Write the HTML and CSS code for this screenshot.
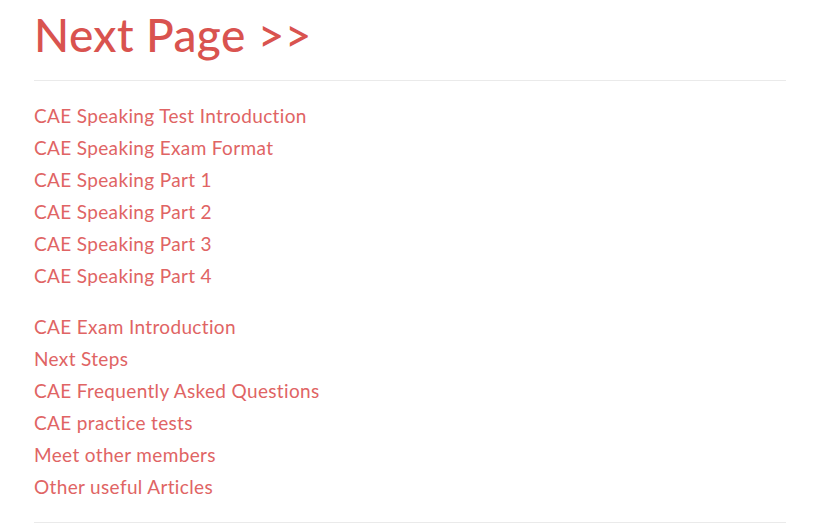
FILE: index.html
```html
<!DOCTYPE html>
<html>
<head>
<meta charset="utf-8">
<link rel="stylesheet" href="styles.css">
</head>
<body>
<div class="page">
  <h1 class="title">Next Page &gt;&gt;</h1>
  <hr class="rule">
  <ul class="links">
    <li><a href="#">CAE Speaking Test Introduction</a></li>
    <li><a href="#">CAE Speaking Exam Format</a></li>
    <li><a href="#">CAE Speaking Part 1</a></li>
    <li><a href="#">CAE Speaking Part 2</a></li>
    <li><a href="#">CAE Speaking Part 3</a></li>
    <li><a href="#">CAE Speaking Part 4</a></li>
  </ul>
  <ul class="links second">
    <li><a href="#">CAE Exam Introduction</a></li>
    <li><a href="#">Next Steps</a></li>
    <li><a href="#">CAE Frequently Asked Questions</a></li>
    <li><a href="#">CAE practice tests</a></li>
    <li><a href="#">Meet other members</a></li>
    <li><a href="#">Other useful Articles</a></li>
  </ul>
  <hr class="rule bottom">
</div>
</body>
</html>
```

FILE: styles.css
```css
html, body {
  margin: 0;
  padding: 0;
  background: #fff;
}
.page {
  width: 752px;
  margin-left: 34px;
  font-family: Lato, "Open Sans", sans-serif;
}
.title {
  margin: 0;
  padding-top: 8px;
  height: 80px;
  box-sizing: border-box;
  font-size: 46px;
  font-weight: 500;
  line-height: 54px;
  color: #d9534f;
  letter-spacing: 0.4px;
}
.rule {
  margin: 0;
  border: 0;
  border-top: 1px solid #eaeaea;
  height: 0;
}
.links {
  list-style: none;
  margin: 0;
  padding: 19px 0 0 0;
}
.links.second {
  padding-top: 19px;
}
.links li {
  height: 32px;
  line-height: 32px;
  font-size: 19px;
}
.links a {
  color: #e06464;
  text-decoration: none;
  letter-spacing: 0.35px;
}
.rule.bottom {
  margin-top: 19px;
}
```
